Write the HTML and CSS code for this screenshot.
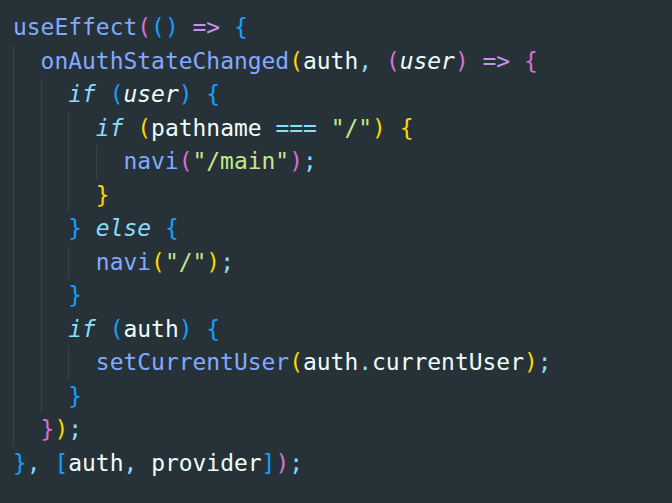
FILE: index.html
```html
<!DOCTYPE html>
<html>
<head>
<meta charset="utf-8">
<link rel="stylesheet" href="styles.css">
</head>
<body>
<div class="code">
<div class="ln"><span class="fn">useEffect</span><span class="b2">(</span><span class="b3">()</span> <span class="op">=&gt;</span> <span class="b3">{</span></div>
<div class="ln"><span class="g"></span><span class="fn">onAuthStateChanged</span><span class="b1">(</span><span class="id">auth</span><span class="p">,</span> <span class="b2">(</span><span class="prm">user</span><span class="b2">)</span> <span class="op">=&gt;</span> <span class="b2">{</span></div>
<div class="ln"><span class="g"></span><span class="g"></span><span class="kw">if</span> <span class="b3">(</span><span class="prm">user</span><span class="b3">)</span> <span class="b3">{</span></div>
<div class="ln"><span class="g"></span><span class="g"></span><span class="g"></span><span class="kw">if</span> <span class="b1">(</span><span class="id">pathname</span> <span class="p">===</span> <span class="str">"/"</span><span class="b1">)</span> <span class="b1">{</span></div>
<div class="ln"><span class="g"></span><span class="g"></span><span class="g"></span><span class="g"></span><span class="fn">navi</span><span class="b2">(</span><span class="str">"/main"</span><span class="b2">)</span><span class="p">;</span></div>
<div class="ln"><span class="g"></span><span class="g"></span><span class="g"></span><span class="b1">}</span></div>
<div class="ln"><span class="g"></span><span class="g"></span><span class="b3">}</span> <span class="kw">else</span> <span class="b3">{</span></div>
<div class="ln"><span class="g"></span><span class="g"></span><span class="g"></span><span class="fn">navi</span><span class="b1">(</span><span class="str">"/"</span><span class="b1">)</span><span class="p">;</span></div>
<div class="ln"><span class="g"></span><span class="g"></span><span class="b3">}</span></div>
<div class="ln"><span class="g"></span><span class="g"></span><span class="kw">if</span> <span class="b3">(</span><span class="id">auth</span><span class="b3">)</span> <span class="b3">{</span></div>
<div class="ln"><span class="g"></span><span class="g"></span><span class="g"></span><span class="fn">setCurrentUser</span><span class="b1">(</span><span class="id">auth</span><span class="p">.</span><span class="id">currentUser</span><span class="b1">)</span><span class="p">;</span></div>
<div class="ln"><span class="g"></span><span class="g"></span><span class="b3">}</span></div>
<div class="ln"><span class="g"></span><span class="b2">}</span><span class="b1">)</span><span class="p">;</span></div>
<div class="ln"><span class="b3">}</span><span class="p">,</span> <span class="b3">[</span><span class="id">auth</span><span class="p">,</span> <span class="id">provider</span><span class="b3">]</span><span class="b2">)</span><span class="p">;</span></div>
</div>
</body>
</html>
```
FILE: styles.css
```css
html, body {
  margin: 0;
  padding: 0;
  background: #263238;
  width: 672px;
  height: 503px;
  overflow: hidden;
}
.code {
  padding: 11px 0 0 13px;
  font-family: "DejaVu Sans Mono", "Liberation Mono", monospace;
  font-size: 22.95px;
  color: #EEFFFF;
}
.ln {
  height: 33.5px;
  line-height: 33.5px;
  white-space: pre;
}
.g {
  display: inline-block;
  width: 2ch;
  height: 33.5px;
  vertical-align: top;
  box-shadow: inset 1px 0 0 #36454c;
}
.fn { color: #82AAFF; }
.id { color: #EEFFFF; }
.prm { color: #EEFFFF; font-style: italic; }
.kw { color: #89DDFF; font-style: italic; }
.op { color: #C792EA; }
.p { color: #89DDFF; }
.str { color: #C3E88D; }
.b1 { color: #FFD700; }
.b2 { color: #DA70D6; }
.b3 { color: #179FFF; }
```
